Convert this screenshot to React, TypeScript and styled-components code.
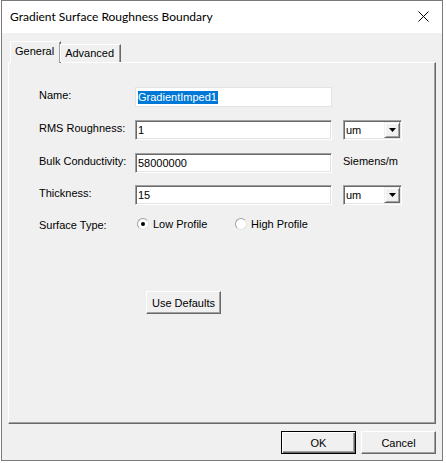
import React from "react";
import styled, { createGlobalStyle } from "styled-components";

const Global = createGlobalStyle`
  html, body { margin: 0; padding: 0; background: #ffffff; }
  body { font-family: "Liberation Sans", Arial, sans-serif; font-size: 11px; color: #000; }
  * { box-sizing: border-box; }
`;

const Page = styled.div`
  padding-left: 1px;
  width: 446px;
  height: 463px;
`;

const Window = styled.div`
  width: 442px;
  height: 461px;
  border: 1px solid #7a7a7a;
  display: flex;
  flex-direction: column;
  background: #f0f0f0;
`;

const TitleBar = styled.div`
  height: 32px;
  background: #ffffff;
  display: flex;
  align-items: center;
  justify-content: space-between;
  padding: 0 9px 0 8px;
  flex: none;
`;

const Title = styled.div`
  font-family: "Lato", "Noto Sans", sans-serif;
  font-size: 12px;
  color: #000;
  margin-top: -1px;
`;

const CloseBox = styled.div`
  width: 12px;
  height: 12px;
  display: flex;
  align-items: center;
  justify-content: center;
  margin-top: -2px;
  margin-right: 4px;
`;

const Client = styled.div`
  flex: 1;
  display: flex;
  flex-direction: column;
  padding: 8px 6px 0 6px;
`;

const TabRow = styled.div`
  display: flex;
  align-items: flex-end;
  height: 21px;
  padding-left: 2px;
  position: relative;
  z-index: 1;
`;

const Tab = styled.div<{ $active?: boolean }>`
  height: ${(p) => (p.$active ? "22px" : "18px")};
  margin-bottom: ${(p) => (p.$active ? "-1px" : "0")};
  padding: ${(p) => (p.$active ? "3px 6px 0 4px" : "2px 6px 0 4px")};
  background: #f0f0f0;
  border-top: 1px solid #ffffff;
  border-left: 1px solid #ffffff;
  border-right: 1px solid #696969;
  box-shadow: inset -1px 0 #a0a0a0;
  line-height: 13px;
  font-size: 11px;
  color: #000;
  margin-left: ${(p) => (p.$active ? "0" : "-1px")};
`;

const Panel = styled.div`
  height: 362px;
  border-style: solid;
  border-width: 1px;
  border-color: #ffffff #696969 #696969 #ffffff;
  box-shadow: inset -1px -1px #a0a0a0;
  padding: 0 0 0 30px;
  display: flex;
  flex-direction: column;
  align-items: flex-start;
`;

const Row = styled.div<{ $top: number; $h?: number }>`
  display: grid;
  grid-template-columns: 96px 197px 11px 59px;
  height: ${(p) => p.$h ?? 20}px;
  margin-top: ${(p) => p.$top}px;
  align-items: start;
`;

const Label = styled.div`
  grid-column: 1;
  line-height: 14px;
  padding-top: 1px;
  white-space: nowrap;
`;

const Sunken = styled.div`
  height: 20px;
  background: #ffffff;
  border-style: solid;
  border-width: 1px;
  border-color: #a0a0a0 #ffffff #ffffff #a0a0a0;
  box-shadow: inset 1px 1px #696969, inset -1px -1px #e3e3e3;
`;

const TextBox = styled(Sunken)<{ $flat?: boolean }>`
  grid-column: 2;
  padding: 2px 0 0 2px;
  line-height: 14px;
  white-space: nowrap;
  ${(p) =>
    p.$flat
      ? `border-color: #e3e3e3; box-shadow: inset 0 0 0 1px #ffffff;`
      : ""}
`;

const Selected = styled.span`
  background: #0078d7;
  color: #ffffff;
  padding: 0 1px 0 0;
  display: inline-block;
  line-height: 13px;
`;

const Combo = styled(Sunken)`
  grid-column: 4;
  display: flex;
  align-items: stretch;
  justify-content: space-between;
  padding: 1px 1px 1px 2px;
  line-height: 14px;
`;

const ComboText = styled.span`
  padding-top: 1px;
`;

const DropButton = styled.div`
  width: 16px;
  background: #f0f0f0;
  border-style: solid;
  border-width: 1px;
  border-color: #f0f0f0 #696969 #696969 #f0f0f0;
  box-shadow: inset 1px 1px #ffffff, inset -1px -1px #a0a0a0;
  display: flex;
  align-items: center;
  justify-content: center;
`;

const Unit = styled.div`
  grid-column: 4;
  line-height: 14px;
  padding-top: 1px;
  white-space: nowrap;
`;

const RadioGroup = styled.div`
  grid-column: 2 / span 3;
  display: flex;
  padding-left: 2px;
`;

const RadioOption = styled.div`
  width: 98px;
  display: flex;
  align-items: center;
  gap: 4px;
  line-height: 14px;
  white-space: nowrap;
`;

const RadioCircle = styled.div<{ $checked?: boolean }>`
  width: 12px;
  height: 12px;
  border-radius: 50%;
  background: #ffffff;
  border: 1px solid;
  border-color: #a0a0a0 #e3e3e3 #e3e3e3 #a0a0a0;
  display: flex;
  align-items: center;
  justify-content: center;
  &::after {
    content: "";
    width: 4px;
    height: 4px;
    border-radius: 50%;
    background: ${(p) => (p.$checked ? "#000" : "transparent")};
  }
`;

const Button = styled.div<{ $default?: boolean }>`
  width: 75px;
  height: 23px;
  background: #f0f0f0;
  border-style: solid;
  border-width: 1px;
  border-color: ${(p) =>
    p.$default ? "#000 #000 #000 #000" : "#ffffff #696969 #696969 #ffffff"};
  box-shadow: ${(p) =>
    p.$default
      ? "inset 1px 1px #ffffff, inset -1px -1px #696969, inset -2px -2px #a0a0a0"
      : "inset -1px -1px #a0a0a0"};
  display: flex;
  align-items: center;
  justify-content: center;
  line-height: 14px;
  color: #000;
`;

const DefaultsButton = styled(Button)`
  margin: 60px 0 0 107px;
`;

const Footer = styled.div`
  display: flex;
  justify-content: flex-end;
  gap: 5px;
  margin-top: 7px;
`;

const Arrow = () => (
  <svg width="7" height="4" viewBox="0 0 7 4">
    <path d="M0 0 H7 L3.5 4 Z" fill="#000" />
  </svg>
);

const CloseIcon = () => (
  <svg width="11" height="11" viewBox="0 0 11 11">
    <path d="M0.5 0.5 L10.5 10.5 M10.5 0.5 L0.5 10.5" stroke="#000" strokeWidth="1" />
  </svg>
);

const UnitCombo = ({ value }: { value: string }) => (
  <Combo>
    <ComboText>{value}</ComboText>
    <DropButton>
      <Arrow />
    </DropButton>
  </Combo>
);

export default function App() {
  return (
    <Page>
      <Global />
      <Window>
        <TitleBar>
          <Title>Gradient Surface Roughness Boundary</Title>
          <CloseBox>
            <CloseIcon />
          </CloseBox>
        </TitleBar>
        <Client>
          <TabRow>
            <Tab $active>General</Tab>
            <Tab>Advanced</Tab>
          </TabRow>
          <Panel>
            <Row $top={24}>
              <Label>Name:</Label>
              <TextBox $flat>
                <Selected>GradientImped1</Selected>
              </TextBox>
            </Row>
            <Row $top={13}>
              <Label>RMS Roughness:</Label>
              <TextBox>1</TextBox>
              <UnitCombo value="um" />
            </Row>
            <Row $top={13}>
              <Label>Bulk Conductivity:</Label>
              <TextBox>58000000</TextBox>
              <Unit>Siemens/m</Unit>
            </Row>
            <Row $top={12}>
              <Label>Thickness:</Label>
              <TextBox>15</TextBox>
              <UnitCombo value="um" />
            </Row>
            <Row $top={12} $h={14}>
              <Label>Surface Type:</Label>
              <RadioGroup>
                <RadioOption>
                  <RadioCircle $checked />
                  Low Profile
                </RadioOption>
                <RadioOption>
                  <RadioCircle />
                  High Profile
                </RadioOption>
              </RadioGroup>
            </Row>
            <DefaultsButton>Use Defaults</DefaultsButton>
          </Panel>
          <Footer>
            <Button $default>OK</Button>
            <Button>Cancel</Button>
          </Footer>
        </Client>
      </Window>
    </Page>
  );
}
